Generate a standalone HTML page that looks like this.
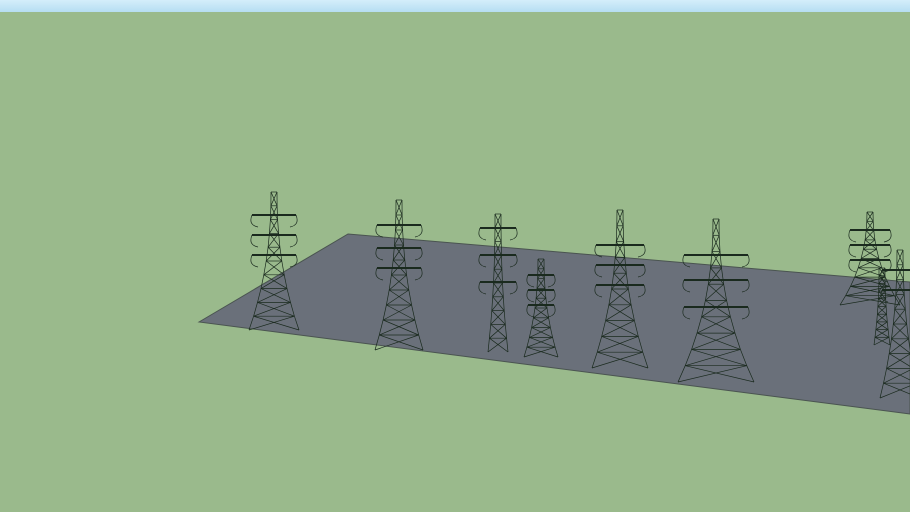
<!DOCTYPE html>
<html><head><meta charset="utf-8"><style>
html,body{margin:0;padding:0;width:910px;height:512px;overflow:hidden;background:#9aba8c}
.sky{position:absolute;left:0;top:0;width:910px;height:12px;background:linear-gradient(#d4eefa,#b6def2)}
svg{position:absolute;left:0;top:0}
</style></head><body>
<div class="sky"></div>
<svg id="s" width="910" height="512" viewBox="0 0 910 512">
<polygon points="199,322 348,234 910,282 910,414" fill="#6a707a" stroke="#4a5450" stroke-width="1"/>
<g id="t" fill="none" stroke="#1a2a1e" stroke-width="0.7"></g>
</svg>
<script>
var T=[[274,192,330,25,[215,235,255],22],[399,200,350,24,[225,248,268],22],[498,214,352,10,[228,255,282],18],[541,259,357,17,[275,290,305],13],[620,210,368,28,[245,265,285],24],[716,219,382,38,[255,280,307],32],[870,212,305,30,[230,245,260],20],[882,268,345,8,[],0],[900,250,398,20,[270,290],18]];
var g=document.getElementById('t'),h='';
T.forEach(function(a){var x=a[0],t=a[1],b=a[2],w=a[3],n=10,L=[],R=[];
for(var i=0;i<=n;i++){var f=i/n,y=t+(b-t)*f,hw=3+(w-3)*Math.pow(f,2.2);L.push([x-hw,y]);R.push([x+hw,y]);}
var p=function(q){return q.map(function(c){return c[0].toFixed(1)+','+c[1].toFixed(1)}).join(' ')};
h+='<polyline points="'+p(L)+'"/><polyline points="'+p(R)+'"/>';
for(i=0;i<n;i++){h+='<line x1="'+L[i][0]+'" y1="'+L[i][1]+'" x2="'+R[i+1][0]+'" y2="'+R[i+1][1]+'"/><line x1="'+R[i][0]+'" y1="'+R[i][1]+'" x2="'+L[i+1][0]+'" y2="'+L[i+1][1]+'"/><line x1="'+L[i][0]+'" y1="'+L[i][1]+'" x2="'+R[i][0]+'" y2="'+R[i][1]+'"/>';}
a[4].forEach(function(y){var s=a[5];h+='<line x1="'+(x-s)+'" y1="'+y+'" x2="'+(x+s)+'" y2="'+y+'" stroke-width="2"/><path d="M'+(x-s)+' '+y+' q'+(-4)+' 10 6 12 M'+(x+s)+' '+y+' q4 10 -6 12"/>';});
});
g.innerHTML=h;
</script>
</body></html>
